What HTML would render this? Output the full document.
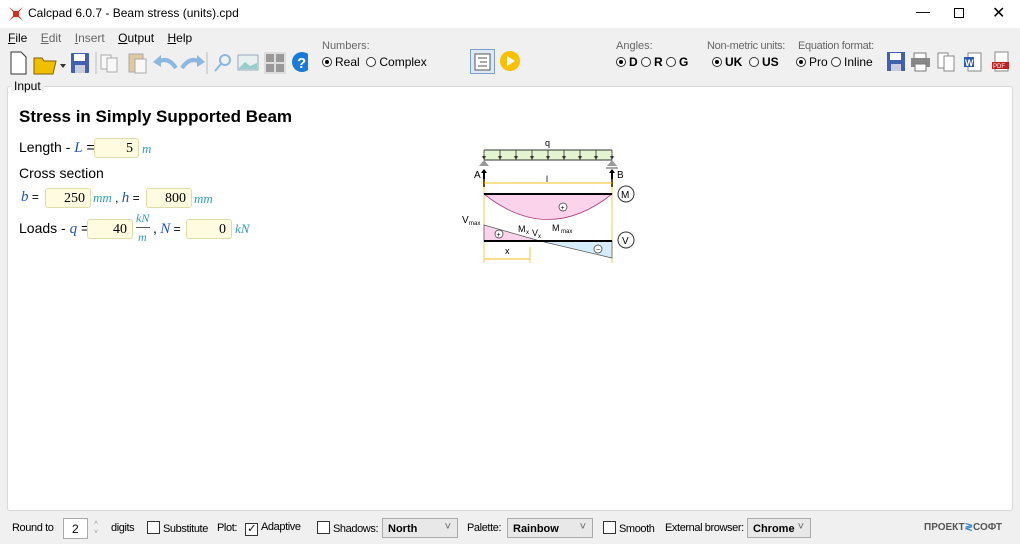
<!DOCTYPE html>
<html><head><meta charset="utf-8"><style>
*{box-sizing:border-box;margin:0;padding:0}
body{width:1020px;height:544px;background:#f0f0f0;font-family:"Liberation Sans",sans-serif;font-size:12px;color:#000;position:relative;overflow:hidden}
.a{position:absolute;white-space:nowrap}
.rad{display:inline-block;width:10px;height:10px;border:1px solid #333;border-radius:50%;vertical-align:-1px;margin-right:3px;background:#fff;position:relative}
.rad.on::after{content:"";position:absolute;left:2px;top:2px;width:4px;height:4px;border-radius:50%;background:#000}
.chk{display:inline-block;width:13px;height:13px;border:1px solid #333;background:#fff;vertical-align:-2px;margin-right:3px}
.in{position:absolute;background:#fffbe0;border:1px solid #e0dca8;border-radius:3px;font-family:"Liberation Serif",serif;font-size:14px;text-align:right;padding-right:5px;height:20px;line-height:19px}
.v{font-family:"Liberation Serif",serif;font-style:italic;color:#2050c0;font-size:15px}
.u{font-family:"Liberation Serif",serif;font-style:italic;color:#30a0b0;font-size:13px}
.lbl{font-size:14px;color:#000}
.sel{position:absolute;height:20px;border:1px solid #aaa;background:#e8e8e8;font-size:11px;padding:4px 0 0 5px;font-weight:bold}
.sel::after{content:"˅";position:absolute;right:6px;top:2px;color:#666;font-weight:normal}
.g{color:#666}
.sb{font-size:11px;letter-spacing:-0.4px}
</style></head><body>
<div class="a" style="left:0;top:0;width:1020px;height:28px;background:#fff"></div>
<svg class="a" style="left:8px;top:6px" width="16" height="16"><path d="M1 1 L6 5 L10 5 L15 1 L11 6 L11 10 L15 15 L10 11 L6 11 L1 15 L5 10 L5 6Z" fill="#d03020"/></svg>
<div class="a" style="left:28px;top:6px;font-size:12px">Calcpad 6.0.7 - Beam stress (units).cpd</div>
<div class="a" style="left:916px;top:3px;font-size:14px">—</div>
<div class="a" style="left:954px;top:8px;width:10px;height:10px;border:1px solid #000"></div>
<div class="a" style="left:992px;top:3px;font-size:16px">✕</div>
<div class="a" style="left:8px;top:31px;font-size:12px"><u>F</u>ile&nbsp;&nbsp;&nbsp;&nbsp;<span class="g"><u>E</u>dit</span>&nbsp;&nbsp;&nbsp;&nbsp;<span class="g"><u>I</u>nsert</span>&nbsp;&nbsp;&nbsp;&nbsp;<u>O</u>utput&nbsp;&nbsp;&nbsp;&nbsp;<u>H</u>elp</div>
<svg class="a" style="left:8px;top:50px" width="300" height="26">
<path d="M3 2h10l5 5v17H3z" fill="#fff" stroke="#333"/>
<path d="M26 8h8l2 3h12l-3 13H26z" fill="#f0c000" stroke="#806000"/>
<path d="M52 14l3 4 3-4z" fill="#333"/>
<rect x="63" y="3" width="18" height="20" fill="#4060b0" rx="1"/><rect x="66" y="4" width="11" height="7" fill="#fff"/><rect x="67" y="15" width="10" height="8" fill="#ccd"/>
<line x1="88" y1="2" x2="88" y2="24" stroke="#bbb"/>
<rect x="93" y="5" width="10" height="14" fill="#f8f8f8" stroke="#aaa"/><rect x="99" y="8" width="10" height="14" fill="#f8f8f8" stroke="#aaa"/>
<rect x="121" y="4" width="14" height="18" fill="#e0c8a0" stroke="#aaa"/><rect x="127" y="9" width="11" height="14" fill="#f8f8f8" stroke="#aaa"/>
<path d="M150 12 q10 -6 18 6" stroke="#8ab8e0" stroke-width="4" fill="none"/><path d="M145 12l8-7v12z" fill="#8ab8e0"/>
<path d="M192 12 q-10 -6 -18 6" stroke="#8ab8e0" stroke-width="4" fill="none"/><path d="M197 12l-8-7v12z" fill="#8ab8e0"/>
<line x1="199" y1="2" x2="199" y2="24" stroke="#bbb"/>
<circle cx="217" cy="10" r="5" fill="none" stroke="#8ab8e0" stroke-width="2"/><line x1="213" y1="14" x2="207" y2="21" stroke="#8ab8e0" stroke-width="2"/>
<rect x="230" y="5" width="20" height="15" fill="#e8f0f0" stroke="#9ab"/><path d="M231 18l6-6 5 4 7-3v6h-18z" fill="#9cc"/>
<rect x="256" y="2" width="22" height="22" fill="#ddd"/><rect x="258" y="4" width="8" height="8" fill="#999"/><rect x="268" y="4" width="8" height="8" fill="#999"/><rect x="258" y="14" width="8" height="8" fill="#999"/><rect x="268" y="14" width="8" height="8" fill="#999"/>
<circle cx="294" cy="12" r="10" fill="#1a7ad8"/><text x="289" y="18" fill="#fff" font-size="15" font-weight="bold" font-family="Liberation Sans">?</text>
</svg>
<div class="a g" style="left:322px;top:40px;font-size:11px">Numbers:</div>
<div class="a" style="left:322px;top:55px"><span class="rad on"></span>Real&nbsp;&nbsp;<span class="rad"></span>Complex</div>
<div class="a" style="left:470px;top:49px;width:25px;height:25px;border:1px solid #7aa0c8;background:#dde8f3"></div>
<svg class="a" style="left:474px;top:53px" width="18" height="18"><rect x="1" y="1" width="15" height="16" fill="#fff" stroke="#555"/><path d="M4 5h9M6 9h7M4 13h9" stroke="#555"/></svg>
<svg class="a" style="left:500px;top:51px" width="21" height="21"><circle cx="10" cy="10" r="10" fill="#f8c000"/><path d="M7 5l8 5-8 5z" fill="#fff"/></svg>
<div class="a g" style="left:616px;top:40px;font-size:11px">Angles:</div>
<div class="a" style="left:616px;top:55px;font-weight:bold"><span class="rad on"></span>D&nbsp;<span class="rad"></span>R&nbsp;<span class="rad"></span>G</div>
<div class="a g" style="left:707px;top:40px;font-size:11px;letter-spacing:-0.3px">Non-metric units:</div>
<div class="a" style="left:712px;top:55px;font-weight:bold"><span class="rad on"></span>UK&nbsp;&nbsp;<span class="rad"></span>US</div>
<div class="a g" style="left:798px;top:40px;font-size:11px;letter-spacing:-0.3px">Equation format:</div>
<div class="a" style="left:796px;top:55px"><span class="rad on"></span>Pro&nbsp;<span class="rad"></span>Inline</div>
<svg class="a" style="left:886px;top:50px" width="130" height="24">
<rect x="1" y="2" width="18" height="19" fill="#4060b0"/><rect x="4" y="3" width="11" height="7" fill="#fff"/><rect x="5" y="14" width="10" height="7" fill="#ccd"/>
<rect x="28" y="3" width="12" height="6" fill="#fff" stroke="#777"/><rect x="25" y="8" width="19" height="9" fill="#888"/><rect x="29" y="14" width="11" height="7" fill="#fff" stroke="#777"/>
<rect x="52" y="3" width="10" height="15" fill="#fff" stroke="#888"/><rect x="58" y="6" width="10" height="15" fill="#fff" stroke="#888"/>
<rect x="82" y="3" width="13" height="18" fill="#fff" stroke="#888"/><rect x="78" y="7" width="10" height="10" fill="#2a5cb0"/><text x="79" y="16" fill="#fff" font-size="9" font-weight="bold" font-family="Liberation Sans">W</text>
<rect x="109" y="2" width="13" height="19" fill="#fff" stroke="#888"/><rect x="106" y="12" width="17" height="7" fill="#c02020"/><text x="107" y="18" fill="#fff" font-size="6" font-family="Liberation Sans">PDF</text>
</svg>
<div class="a" style="left:7px;top:86px;width:1006px;height:425px;border:1px solid #d8d8d8;border-radius:3px;background:#fff"></div>
<div class="a" style="left:11px;top:79px;background:#f0f0f0;padding:0 3px;font-size:12px;height:12px;line-height:14px">Input</div>
<div class="a" style="left:19px;top:107px;font-size:17px;font-weight:bold">Stress in Simply Supported Beam</div>
<div class="a lbl" style="left:19px;top:139px">Length - <span class="v">L</span> =</div>
<div class="in" style="left:94px;top:138px;width:45px">5</div>
<div class="a u" style="left:142px;top:141px">m</div>
<div class="a lbl" style="left:19px;top:165px">Cross section</div>
<div class="a" style="left:21px;top:189px"><span class="v">b</span> =</div>
<div class="in" style="left:45px;top:188px;width:46px">250</div>
<div class="a" style="left:93px;top:190px"><span class="u">mm</span> , <span class="v">h</span> =</div>
<div class="in" style="left:146px;top:188px;width:46px">800</div>
<div class="a u" style="left:194px;top:191px">mm</div>
<div class="a lbl" style="left:19px;top:220px">Loads - <span class="v">q</span> =</div>
<div class="in" style="left:87px;top:219px;width:46px">40</div>
<div class="a u" style="left:136px;top:211px;font-size:12px">kN</div>
<div class="a" style="left:136px;top:227px;width:14px;border-top:1px solid #555"></div>
<div class="a u" style="left:138px;top:230px;font-size:12px">m</div>
<div class="a" style="left:153px;top:220px"><span class="lbl">,</span> <span class="v">N</span> =</div>
<div class="in" style="left:186px;top:219px;width:46px">0</div>
<div class="a u" style="left:235px;top:221px">kN</div>
<svg class="a" style="left:455px;top:135px" width="190" height="130" font-family="Liberation Sans" font-size="9">
<text x="90" y="11">q</text>
<rect x="29" y="15" width="128" height="10" fill="#e4f4d0"/>
<line x1="29" y1="15" x2="157" y2="15" stroke="#333"/>
<line x1="29" y1="25" x2="157" y2="25" stroke="#333"/>
<g stroke="#333" stroke-width="0.8">
<path d="M29 15v9M45 15v9M61 15v9M77 15v9M93 15v9M109 15v9M125 15v9M141 15v9M157 15v9"/></g>
<g fill="#333"><path d="M27 21l2 4 2-4zM43 21l2 4 2-4zM59 21l2 4 2-4zM75 21l2 4 2-4zM91 21l2 4 2-4zM107 21l2 4 2-4zM123 21l2 4 2-4zM139 21l2 4 2-4zM155 21l2 4 2-4z"/></g>
<path d="M24 31l5-6 5 6z M152 31l5-6 5 6z" fill="#999"/>
<line x1="151" y1="33" x2="163" y2="33" stroke="#555"/>
<path d="M29 52V36 M157 52V36" stroke="#000" stroke-width="2"/>
<path d="M26 38l3-4 3 4z M154 38l3-4 3 4z" fill="#000"/>
<text x="19" y="43" font-size="10">A</text><text x="162" y="43" font-size="10">B</text>
<line x1="29" y1="48" x2="157" y2="48" stroke="#f0c020"/><text x="91" y="47">l</text>
<path d="M29 44V128 M157 44V128" stroke="#f0c020" stroke-width="0.8"/>
<path d="M29 59 Q93 110 157 59Z" fill="#fbd4ec" stroke="#b04080" stroke-width="0.8"/>
<line x1="29" y1="59" x2="157" y2="59" stroke="#000" stroke-width="2"/>
<circle cx="108" cy="72" r="4" fill="#fff" stroke="#333" stroke-width="0.7"/><text x="105.5" y="75" font-size="7">+</text>
<circle cx="171" cy="59" r="8" fill="#fff" stroke="#333"/><text x="166" y="63" font-size="10">M</text>
<text x="7" y="88" font-size="10">V</text><text x="14" y="90" font-size="6">max</text>
<text x="63" y="97">M</text><text x="71" y="99" font-size="6">x</text>
<text x="77" y="101">V</text><text x="83" y="103" font-size="6">x</text>
<text x="97" y="96">M</text><text x="106" y="98" font-size="6">max</text>
<path d="M29 90L85 106H29Z" fill="#fbd4ec" stroke="#555" stroke-width="0.7"/>
<path d="M85 106L157 123V106Z" fill="#d4ecfb" stroke="#555" stroke-width="0.7"/>
<line x1="29" y1="106" x2="157" y2="106" stroke="#000" stroke-width="2"/>
<circle cx="44" cy="99" r="4" fill="#fff" stroke="#333" stroke-width="0.7"/><text x="41.5" y="102" font-size="7">+</text>
<circle cx="143" cy="114" r="4" fill="#fff" stroke="#333" stroke-width="0.7"/><text x="141" y="117" font-size="7">−</text>
<circle cx="171" cy="105" r="8" fill="#fff" stroke="#333"/><text x="167" y="109" font-size="10">V</text>
<line x1="29" y1="124" x2="75" y2="124" stroke="#f0c020"/><line x1="75" y1="112" x2="75" y2="128" stroke="#f0c020" stroke-width="0.8"/>
<text x="50" y="119">x</text>
</svg>
<div class="a sb" style="left:12px;top:522px">Round to</div>
<div class="a" style="left:63px;top:518px;width:25px;height:21px;border:1px solid #aaa;background:#fff;font-size:12px;padding:3px 0 0 8px">2</div>
<div class="a" style="left:94px;top:519px;font-size:7px;color:#999;line-height:9px">˄<br>˅</div>
<div class="a sb" style="left:111px;top:522px">digits</div>
<div class="a sb" style="left:147px;top:521px"><span class="chk"></span>Substitute</div>
<div class="a sb" style="left:217px;top:522px">Plot:</div>
<div class="a sb" style="left:245px;top:521px"><span class="chk" style="text-align:center;line-height:11px;font-size:11px">✓</span>Adaptive</div>
<div class="a sb" style="left:317px;top:521px"><span class="chk"></span>Shadows:</div>
<div class="sel" style="left:382px;top:518px;width:76px">North</div>
<div class="a sb" style="left:467px;top:522px">Palette:</div>
<div class="sel" style="left:507px;top:518px;width:86px">Rainbow</div>
<div class="a sb" style="left:603px;top:521px"><span class="chk"></span>Smooth</div>
<div class="a sb" style="left:665px;top:522px">External browser:</div>
<div class="sel" style="left:747px;top:518px;width:64px">Chrome</div>
<div class="a" style="left:924px;top:522px;font-size:10px;font-weight:bold;color:#555">ПРОЕКТ<span style="color:#3a8ad0">≷</span>СОФТ</div>
</body></html>
